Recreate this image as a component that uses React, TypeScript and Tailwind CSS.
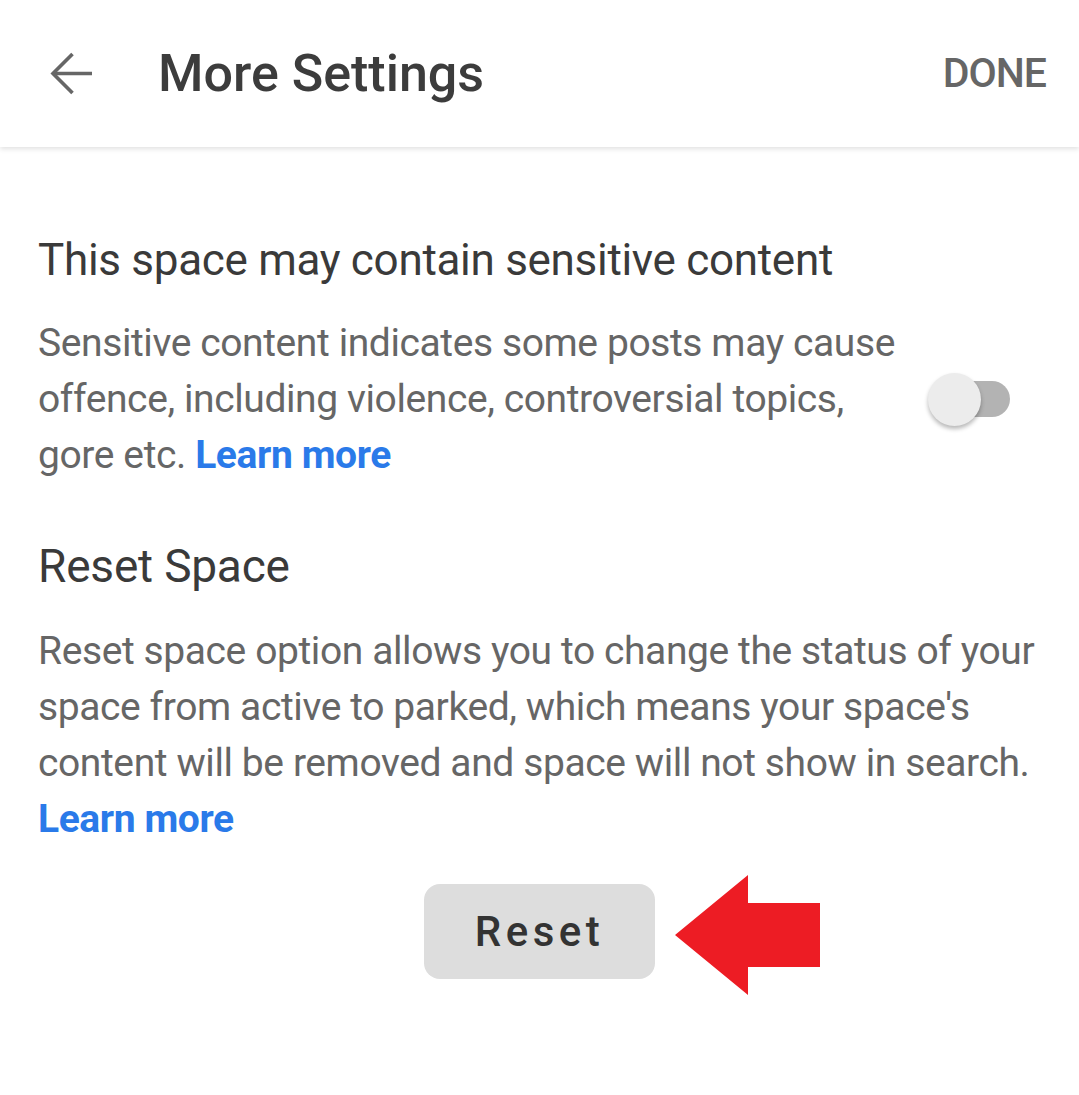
import React from "react";

const Toggle: React.FC = () => (
  <div className="relative w-[84px] h-[56px] flex items-center shrink-0">
    <div className="ml-[12px] w-[70px] h-[36px] rounded-full bg-[#b3b3b3]" />
    <div className="absolute left-0 top-[2px] w-[53px] h-[53px] rounded-full bg-[#ececec] shadow-[0_3px_4px_rgba(0,0,0,0.28)]" />
  </div>
);

export default function App() {
  return (
    <div className="w-[1079px] h-[1095px] bg-white font-['Roboto',sans-serif] overflow-hidden">
      {/* top bar */}
      <header className="h-[147px] flex items-center bg-white shadow-[0_2px_5px_rgba(0,0,0,0.12)] relative z-10">
        <button className="ml-[49px] w-[44px] h-[44px]" aria-label="Back">
          <svg viewBox="0 0 44 44" className="w-[44px] h-[44px]" fill="none" stroke="#666666" strokeWidth="3.6">
            <path d="M43 21.5H4" />
            <path d="M23.5 2 4 21.5 23.5 41" />
          </svg>
        </button>
        <h1 className="ml-[65px] text-[52px] font-medium text-[#3c3c3c] leading-none">More Settings</h1>
        <div className="ml-auto mr-[33px] text-[41px] font-medium tracking-[-1px] text-[#666666] leading-none">DONE</div>
      </header>

      <main className="pl-[38px] pr-[24px]">
        <h2 className="mt-[85px] text-[44px] tracking-[-0.3px] leading-[56px] text-[#3a3a3a]">
          This space may contain sensitive content
        </h2>
        <div className="mt-[27px] flex items-center">
          <p className="w-[890px] text-[39px] tracking-[-0.4px] leading-[56px] text-[#666666]">
            Sensitive content indicates some posts may cause offence, including violence, controversial topics, gore etc.{" "}
            <span className="font-bold text-[#2a7ae9]">Learn more</span>
          </p>
          <Toggle />
        </div>

        <h2 className="mt-[55px] text-[46px] tracking-[-0.2px] leading-[56px] text-[#3a3a3a]">Reset Space</h2>
        <p className="mt-[29px] text-[39px] tracking-[-0.4px] leading-[56px] text-[#666666]">
          Reset space option allows you to change the status of your space from active to parked, which means your space's content will be removed and space will not show in search.{" "}
          <span className="font-bold text-[#2a7ae9]">Learn more</span>
        </p>

        <div className="mt-[37px] flex justify-center pr-[14px]">
          <div className="relative">
            <button className="w-[231px] h-[95px] rounded-[16px] bg-[#dddddd] text-[42px] font-medium tracking-[4.5px] text-[#333333]">
              Reset
            </button>
            <svg viewBox="0 0 147 122" className="absolute left-[250px] top-[-10px] w-[147px] h-[122px]">
              <polygon points="1,61 74,1 74,29 146,29 146,93 74,93 74,121" fill="#ed1c24" />
            </svg>
          </div>
        </div>
      </main>
    </div>
  );
}
